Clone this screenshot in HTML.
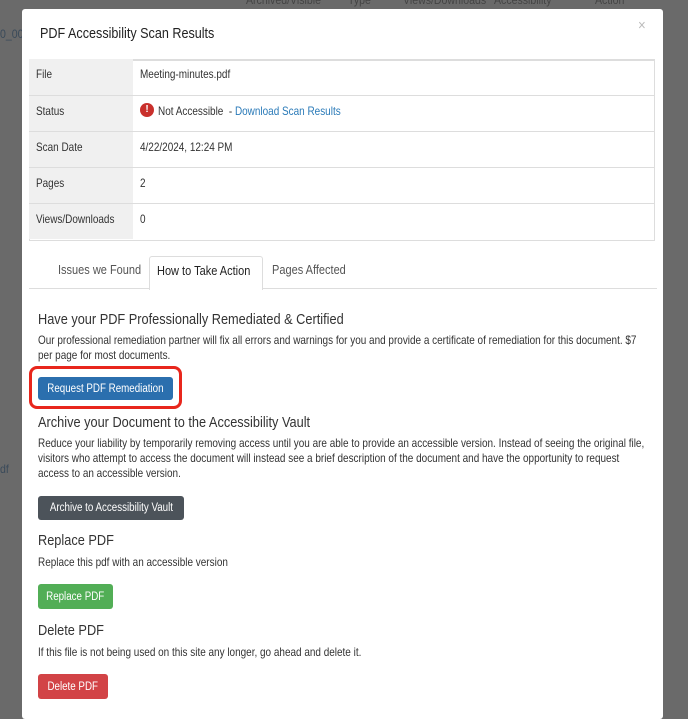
<!DOCTYPE html>
<html><head><style>
*{margin:0;padding:0;box-sizing:border-box}
html,body{width:688px;height:719px;overflow:hidden}
body{background:#6a6a6a;position:relative;font-family:"Liberation Sans",sans-serif;color:#333}
.a{position:absolute;white-space:nowrap;transform:scaleX(.88);transform-origin:left top}
.bg{color:#444;font-size:12px}
.m{position:absolute;left:22px;top:9px;width:641px;height:710px;background:#fff;border-radius:3px}
.t{font-size:12px;color:#333;transform:scaleX(.83)}
.h{font-size:14.5px;color:#333}
.btn{position:absolute;color:#fff;font-size:11.5px;border-radius:3px;display:flex;align-items:center;justify-content:center;white-space:nowrap}
.btn span{display:inline-block;transform:scaleX(.85)}
.row{position:absolute;left:29px;width:625px;height:36px;border-top:1px solid #ddd}
.lab{position:absolute;left:0;top:0;width:104px;height:100%;background:#f0f0f0}
</style></head><body>
<div class="a bg" style="left:246px;top:-7px">Archived/Visible</div>
<div class="a bg" style="left:348px;top:-7px">Type</div>
<div class="a bg" style="left:403px;top:-7px">Views/Downloads</div>
<div class="a bg" style="left:494px;top:-7px">Accessibility</div>
<div class="a bg" style="left:595px;top:-7px">Action</div>
<div class="a bg" style="left:0;top:27px;color:#3a4a5a">0_00</div>
<div class="a bg" style="left:0;top:462px;color:#3a4a5a">df</div>
<div class="m"></div>
<div class="a" style="left:638px;top:17px;color:#bbb;font-size:15px">×</div>
<div class="a" style="left:40px;top:25px;font-size:15px;color:#222;transform:scaleX(.84)">PDF Accessibility Scan Results</div>
<div style="position:absolute;left:29px;top:59px;width:626px;height:182px;border:1px solid #ddd;border-top:2px solid #ddd"></div>
<div class="row" style="top:59px;border-top:none"><div class="lab"></div><span class="a t" style="left:7px;top:8px">File</span><span class="a t" style="left:111px;top:8px">Meeting-minutes.pdf</span></div>
<div class="row" style="top:95px"><div class="lab"></div><span class="a t" style="left:7px;top:8px">Status</span>
<span style="position:absolute;left:111px;top:7px;width:14px;height:14px;border-radius:50%;background:#c9302c;color:#fff;font-size:10px;font-weight:bold;text-align:center;line-height:14px">!</span>
<span class="a t" style="left:129px;top:8px">Not Accessible &nbsp;- <span style="color:#2a7ab8">Download Scan Results</span></span></div>
<div class="row" style="top:131px"><div class="lab"></div><span class="a t" style="left:7px;top:8px">Scan Date</span><span class="a t" style="left:111px;top:8px">4/22/2024, 12:24 PM</span></div>
<div class="row" style="top:167px"><div class="lab"></div><span class="a t" style="left:7px;top:8px">Pages</span><span class="a t" style="left:111px;top:8px">2</span></div>
<div class="row" style="top:203px"><div class="lab"></div><span class="a t" style="left:7px;top:8px">Views/Downloads</span><span class="a t" style="left:111px;top:8px">0</span></div>
<div style="position:absolute;left:29px;top:288px;width:628px;height:1px;background:#ddd"></div>
<div style="position:absolute;left:149px;top:256px;width:114px;height:34px;background:#fff;border:1px solid #ddd;border-bottom:none;border-radius:3px 3px 0 0"></div>
<div class="a" style="left:58px;top:263px;font-size:12.5px;color:#555">Issues we Found</div>
<div class="a" style="left:157px;top:264px;font-size:12.5px;color:#222">How to Take Action</div>
<div class="a" style="left:272px;top:263px;font-size:12.5px;color:#555">Pages Affected</div>
<div class="a h" style="left:38px;top:312px">Have your PDF Professionally Remediated &amp; Certified</div>
<div class="a t" style="left:38px;top:333px;line-height:15px">Our professional remediation partner will fix all errors and warnings for you and provide a certificate of remediation for this document. $7<br>per page for most documents.</div>
<div style="position:absolute;left:29px;top:366px;width:153px;height:43px;border:3px solid #e8261c;border-radius:8px"></div>
<div class="btn" style="left:38px;top:377px;width:135px;height:23px;background:#2b6fae"><span>Request PDF Remediation</span></div>
<div class="a h" style="left:38px;top:415px">Archive your Document to the Accessibility Vault</div>
<div class="a t" style="left:38px;top:436px;line-height:15px">Reduce your liability by temporarily removing access until you are able to provide an accessible version. Instead of seeing the original file,<br>visitors who attempt to access the document will instead see a brief description of the document and have the opportunity to request<br>access to an accessible version.</div>
<div class="btn" style="left:38px;top:496px;width:146px;height:24px;background:#4c535a"><span>Archive to Accessibility Vault</span></div>
<div class="a h" style="left:38px;top:533px">Replace PDF</div>
<div class="a t" style="left:38px;top:555px">Replace this pdf with an accessible version</div>
<div class="btn" style="left:38px;top:584px;width:75px;height:25px;background:#52ae56"><span>Replace PDF</span></div>
<div class="a h" style="left:38px;top:623px">Delete PDF</div>
<div class="a t" style="left:38px;top:645px">If this file is not being used on this site any longer, go ahead and delete it.</div>
<div class="btn" style="left:38px;top:674px;width:70px;height:25px;background:#d24346"><span>Delete PDF</span></div>
</body></html>
